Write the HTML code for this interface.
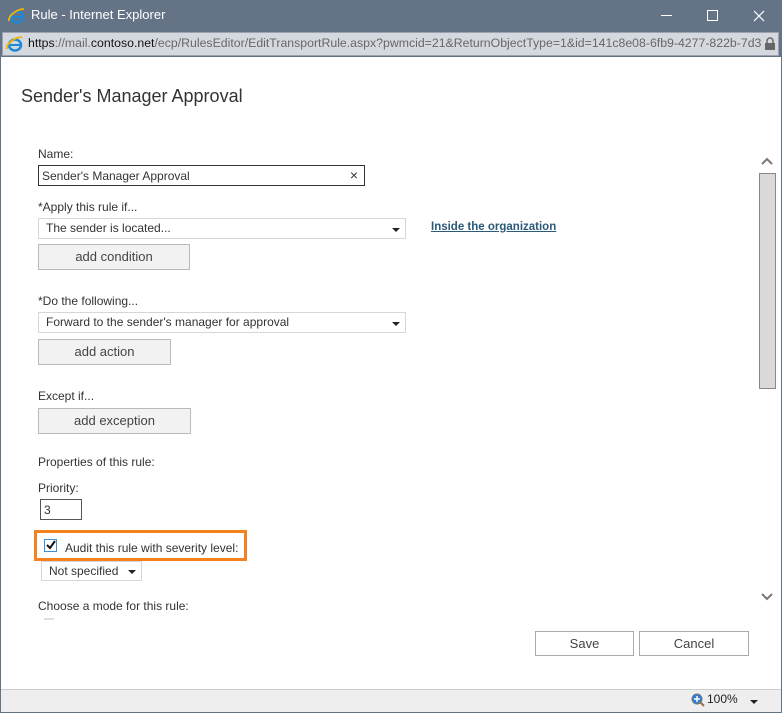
<!DOCTYPE html>
<html><head><meta charset="utf-8"><style>
*{box-sizing:border-box;margin:0;padding:0}
body{width:782px;height:713px;background:#647386;position:relative;overflow:hidden;font-family:"Segoe UI","Liberation Sans",sans-serif;color:#333}
.a{position:absolute}
.t{font-size:12px;color:#333}
.btn{position:absolute;background:#f2f2f2;border:1px solid #b9b9b9;font-size:13px;color:#444;text-align:center}
.sel{position:absolute;background:#fff;border:1px solid #d6d6d6;font-size:12px;color:#333;padding-left:7px}
.arr{position:absolute;width:0;height:0;border-left:4px solid transparent;border-right:4px solid transparent;border-top:4px solid #222}
</style></head><body>
<svg class="a" style="left:8px;top:7px" width="18" height="18" viewBox="0 0 18 18"><ellipse cx="9" cy="10" rx="6" ry="5.5" fill="none" stroke="#1e88d8" stroke-width="2.5"/><rect x="4" y="9" width="10" height="2" fill="#1e88d8"/><path d="M1 14 C0 8 10 2 16 2" fill="none" stroke="#f2b200" stroke-width="1.8"/></svg>
<div class="a" style="left:31px;top:7px;font-size:13px;color:#fff">Rule - Internet Explorer</div>
<div class="a" style="left:661px;top:15px;width:11px;height:1px;background:#fff"></div>
<div class="a" style="left:707px;top:10px;width:11px;height:11px;border:1px solid #fff"></div>
<svg class="a" style="left:753px;top:10px" width="12" height="12"><path d="M1 1L11 11M11 1L1 11" stroke="#fff" stroke-width="1.2"/></svg>
<div class="a" style="left:2px;top:32px;width:777px;height:24px;background:#d5d9df;border:1px solid #9aa3ae;overflow:hidden">
<div class="a" style="left:25px;top:3px;font-size:12.3px;color:#666;white-space:nowrap;width:733px;overflow:hidden"><span style="color:#111">https</span>://mail.<span style="color:#111">contoso.net</span>/ecp/RulesEditor/EditTransportRule.aspx?pwmcid=21&amp;ReturnObjectType=1&amp;id=141c8e08-6fb9-4277-822b-7d39de</div>
</div>
<svg class="a" style="left:6px;top:35px" width="18" height="18" viewBox="0 0 18 18"><ellipse cx="9" cy="10" rx="6" ry="5.5" fill="none" stroke="#1e88d8" stroke-width="2.5"/><rect x="4" y="9" width="10" height="2" fill="#1e88d8"/><path d="M1 14 C0 8 10 2 16 2" fill="none" stroke="#f2b200" stroke-width="1.8"/></svg>
<svg class="a" style="left:764px;top:37px" width="12" height="14"><path d="M3 6 V4 a3 3 0 0 1 6 0 V6" fill="none" stroke="#666" stroke-width="1.5"/><rect x="1" y="6" width="10" height="7" fill="#666"/></svg>
<div class="a" style="left:1px;top:57px;width:780px;height:632px;background:#fff"></div>
<div class="a" style="left:1px;top:689px;width:780px;height:23px;background:#eee;border-top:1px solid #ccc"></div>
<div class="a" style="left:21px;top:86px;font-size:18px;color:#333">Sender's Manager Approval</div>
<div class="a t" style="left:38px;top:147px">Name:</div>
<div class="a" style="left:38px;top:165px;width:327px;height:21px;border:1px solid #333;font-size:12px;padding:3px 0 0 3px">Sender's Manager Approval<span style="position:absolute;right:6px;top:1px;font-size:14px">×</span></div>
<div class="a t" style="left:38px;top:200px">*Apply this rule if...</div>
<div class="sel" style="left:38px;top:218px;width:368px;height:21px;line-height:19px">The sender is located...</div><div class="arr" style="left:392px;top:228px"></div>
<div class="a" style="left:431px;top:221px;font-size:11.5px;font-weight:bold;color:#2c5a7a;text-decoration:underline">Inside the organization</div>
<div class="btn" style="left:38px;top:244px;width:152px;height:26px;line-height:24px">add condition</div>
<div class="a t" style="left:38px;top:294px">*Do the following...</div>
<div class="sel" style="left:38px;top:312px;width:368px;height:21px;line-height:19px">Forward to the sender's manager for approval</div><div class="arr" style="left:392px;top:322px"></div>
<div class="btn" style="left:38px;top:339px;width:133px;height:26px;line-height:24px">add action</div>
<div class="a t" style="left:38px;top:389px">Except if...</div>
<div class="btn" style="left:38px;top:408px;width:153px;height:26px;line-height:24px">add exception</div>
<div class="a t" style="left:38px;top:455px">Properties of this rule:</div>
<div class="a t" style="left:38px;top:481px">Priority:</div>
<div class="a" style="left:40px;top:499px;width:42px;height:21px;border:1px solid #555;font-size:12px;padding:3px 0 0 3px">3</div>
<div class="a" style="left:34px;top:530px;width:213px;height:31px;border:3px solid #f5821f"></div>
<div class="a" style="left:44px;top:539px;width:13px;height:13px;border:1px solid #3c8ed8;background:#fff"></div>
<svg class="a" style="left:45px;top:539px" width="12" height="12"><path d="M2 6L5 9L10 2" fill="none" stroke="#111" stroke-width="2"/></svg>
<div class="a t" style="left:65px;top:541px">Audit this rule with severity level:</div>
<div class="sel" style="left:41px;top:561px;width:101px;height:20px;line-height:18px">Not specified</div><div class="arr" style="left:128px;top:570px"></div>
<div class="a t" style="left:38px;top:599px">Choose a mode for this rule:</div>
<div class="a" style="left:44px;top:618px;width:10px;height:2px;background:#ddd"></div>
<svg class="a" style="left:761px;top:157px" width="12" height="8"><path d="M1 7 L6 2 L11 7" fill="none" stroke="#777" stroke-width="2"/></svg>
<div class="a" style="left:759px;top:173px;width:17px;height:216px;background:#dadada;border:1px solid #888"></div>
<svg class="a" style="left:761px;top:593px" width="12" height="8"><path d="M1 1 L6 6 L11 1" fill="none" stroke="#777" stroke-width="2"/></svg>
<div class="btn" style="left:535px;top:631px;width:99px;height:25px;line-height:23px;background:#fff;border-color:#aaa">Save</div>
<div class="btn" style="left:639px;top:631px;width:110px;height:25px;line-height:23px;background:#fff;border-color:#aaa">Cancel</div>
<svg class="a" style="left:691px;top:693px" width="14" height="14"><circle cx="6" cy="6" r="5" fill="#2a7fd4" stroke="#777"/><path d="M6 3v6M3 6h6" stroke="#fff" stroke-width="1.5"/><path d="M9.5 9.5l3.5 3.5" stroke="#a0703a" stroke-width="2"/></svg>
<div class="a" style="left:707px;top:692px;font-size:12px;color:#222">100%</div>
<div class="arr" style="left:750px;top:700px"></div>
</body></html>
